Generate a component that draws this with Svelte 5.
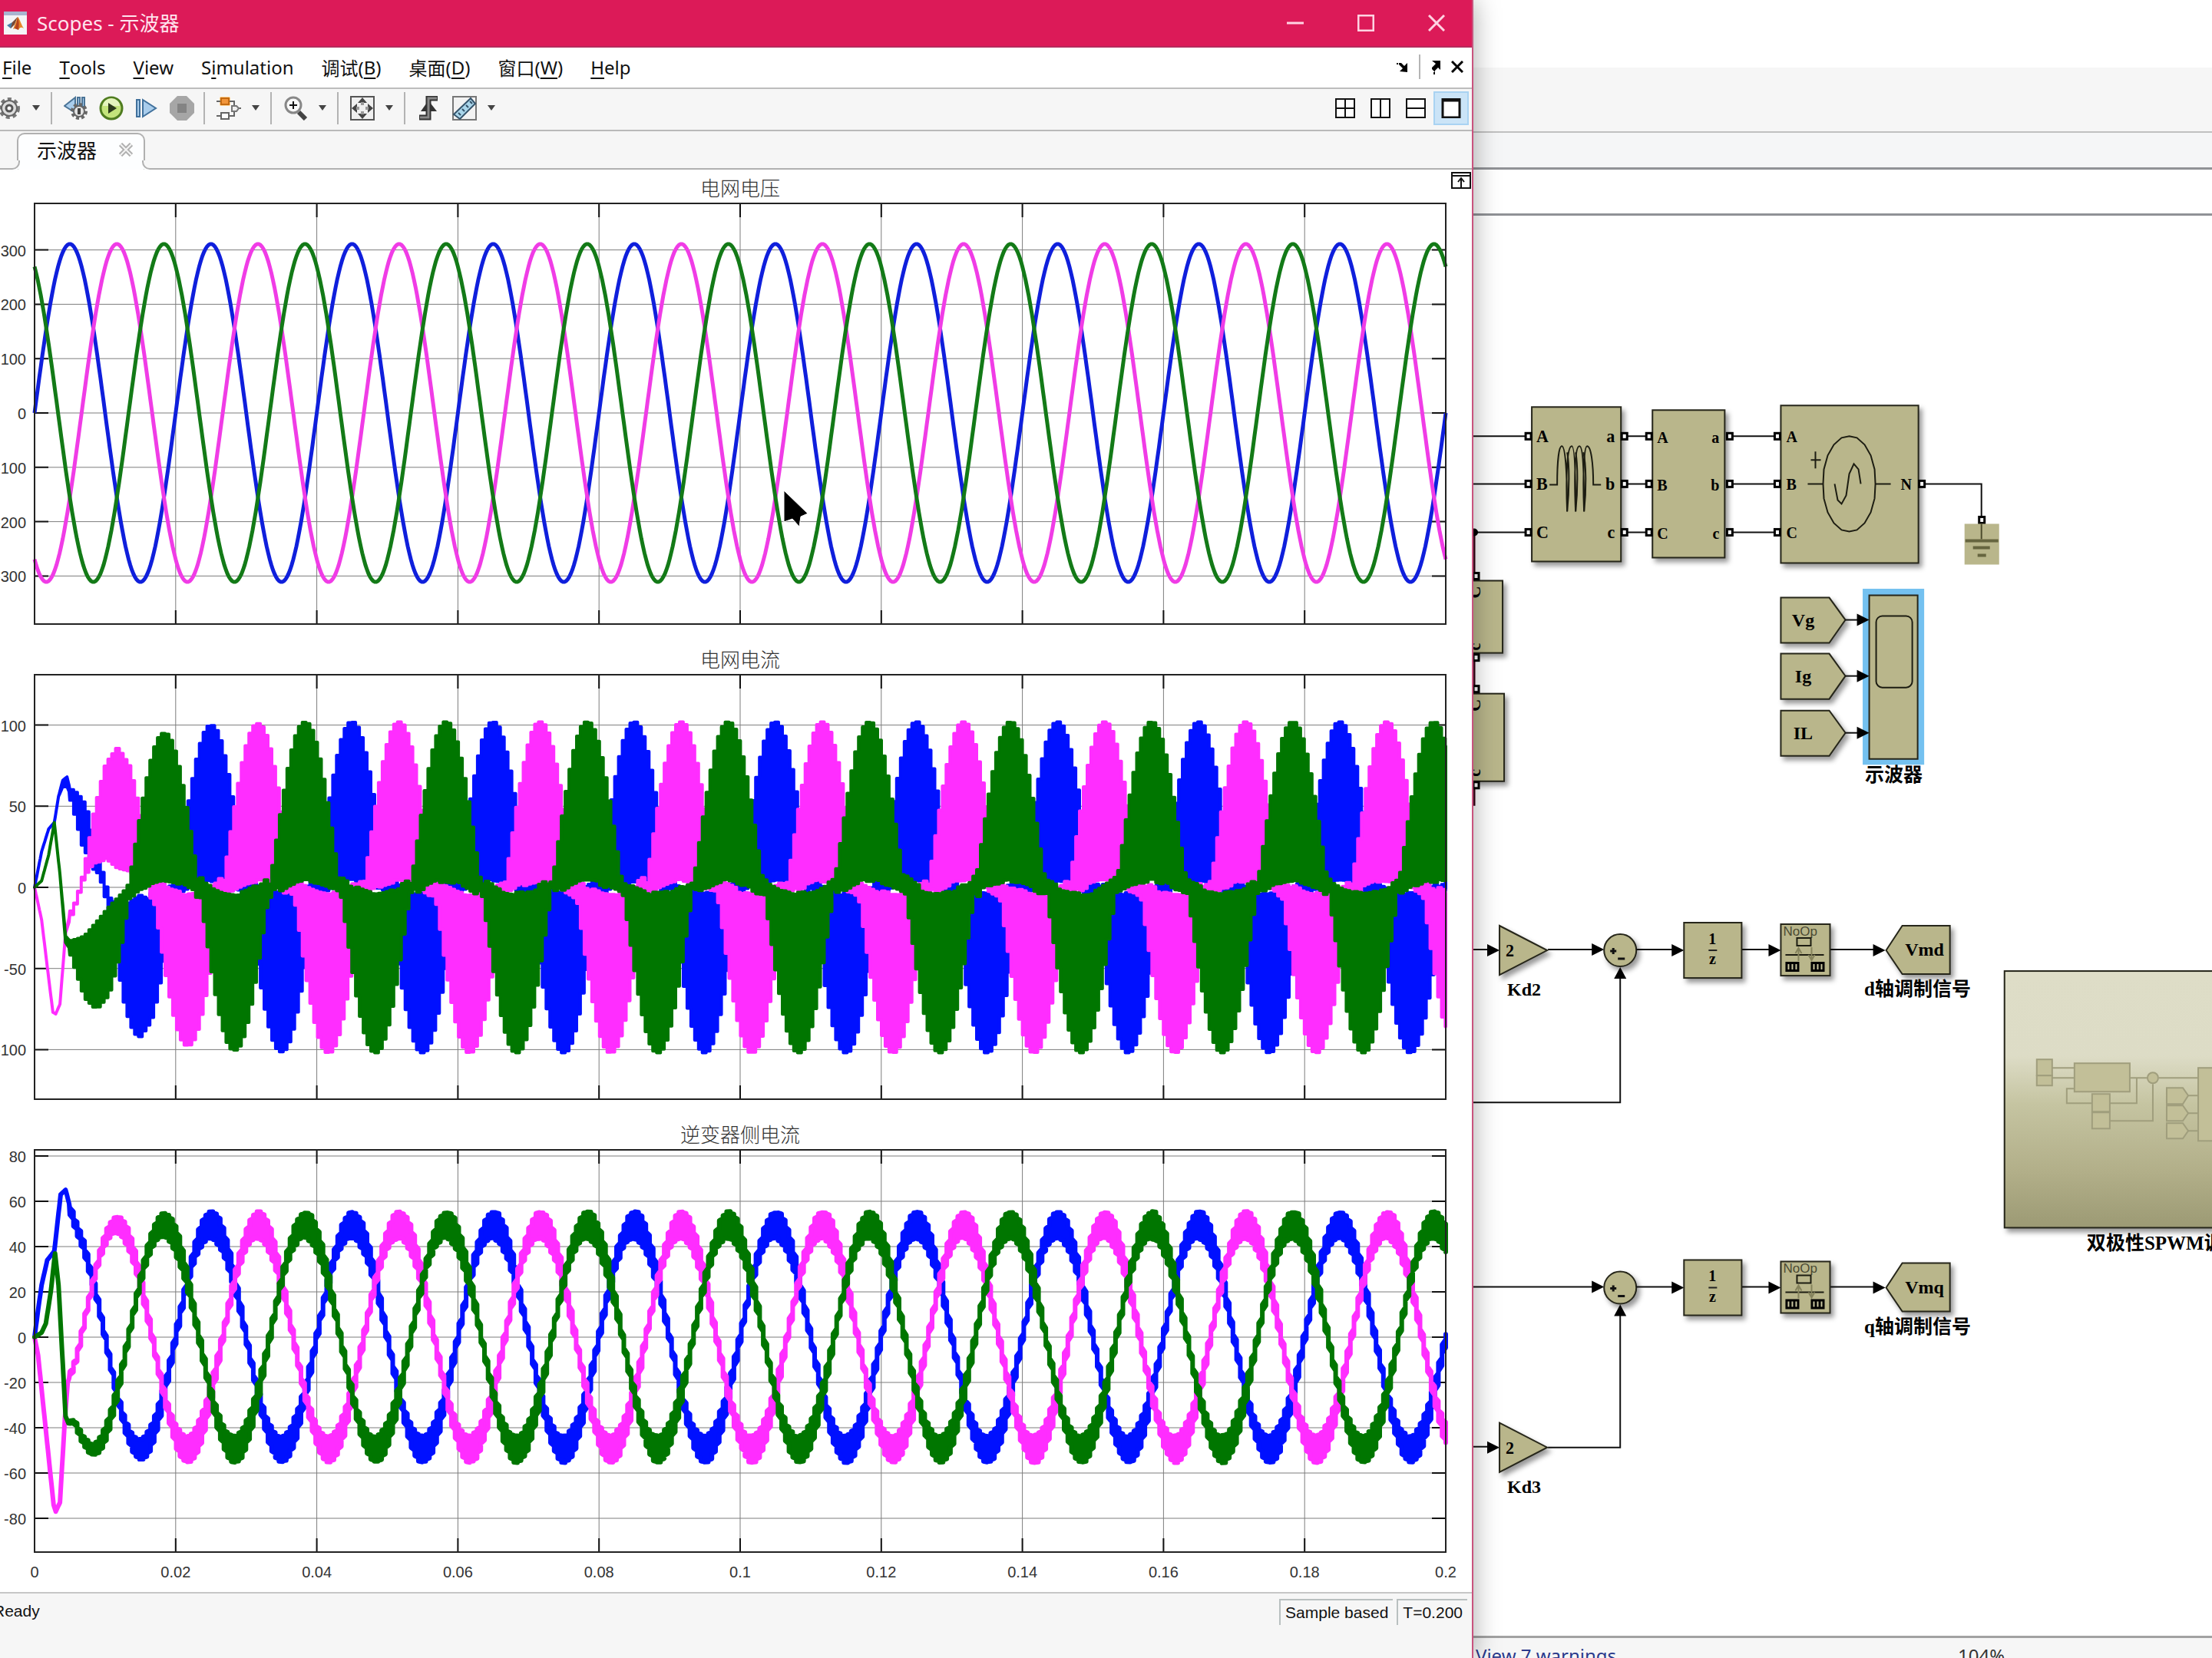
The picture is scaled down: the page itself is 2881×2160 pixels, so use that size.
<script lang="ts">
    type Row = number[];

    const X0 = 45;
    const PLOT_W = 1838;
    const T_END = 0.2;
    const W = 2 * Math.PI * 50;
    const DELAYS = [0, 0.02 / 3, -0.02 / 3];

    const menus = [
        { pre: "", key: "F", post: "ile" },
        { pre: "", key: "T", post: "ools" },
        { pre: "", key: "V", post: "iew" },
        { pre: "S", key: "i", post: "mulation" },
        { pre: "调试(", key: "B", post: ")" },
        { pre: "桌面(", key: "D", post: ")" },
        { pre: "窗口(", key: "W", post: ")" },
        { pre: "", key: "H", post: "elp" }
    ];

    const tx = (t: number) => X0 + (t / T_END) * PLOT_W;
    const noise = (n: number) => {
        const v = Math.sin(n * 12.9898) * 43758.5453;
        return (v - Math.floor(v)) * 2 - 1;
    };

    // linear lookup in rows of [t, a, b]
    function lookup(rows: Row[], t: number, col: number) {
        for (let i = 1; i < rows.length; i++) {
            if (t <= rows[i][0]) {
                const [a, b] = [rows[i - 1], rows[i]];
                return a[col] + ((b[col] - a[col]) * (t - a[0])) / (b[0] - a[0]);
            }
        }
        return rows[rows.length - 1][col];
    }

    function sinePath(delay: number, zero: number, k: number) {
        let d = "";
        for (let i = 0; i <= 900; i++) {
            const t = (i / 900) * T_END;
            d += `${i ? "L" : "M"}${tx(t).toFixed(1)} ${(zero - k * 311 * Math.sin(W * (t - delay))).toFixed(1)}`;
        }
        return d;
    }

    // closed outline of a rippling signal, held for one switching period at a time
    function bandPath(band: (t: number, n: number) => number[], zero: number, k: number, step: number, hold: number, tStart: number) {
        const top: string[] = [];
        const bottom: string[] = [];
        const add = (t: number, v: number[]) => {
            top.push(`${tx(t).toFixed(1)} ${(zero - k * v[1]).toFixed(1)}`);
            bottom.push(`${tx(t).toFixed(1)} ${(zero - k * v[0]).toFixed(1)}`);
        };
        for (let t = 0; t < tStart; t += 0.0001) add(t, band(t, 0));
        let n = 0;
        for (let t = tStart; t < T_END; t += step) {
            n++;
            const end = Math.min(t + step, T_END);
            const mid = (t + end) / 2;
            add(t, band(t * (1 - hold) + mid * hold, n));
            add(end, band(end * (1 - hold) + mid * hold, n));
        }
        return "M" + top.join("L") + "L" + bottom.reverse().join("L") + "Z";
    }

    const gridAmp = [[0, 66], [0.005, 68], [0.0083, 75], [0.0117, 85], [0.015, 92], [0.0183, 95], [0.025, 100], [0.04, 102], [0.2, 102]];
    const gridStart: Row[][] = [
        [[0, 0, 0], [0.001, 22, 22], [0.002, 36, 36], [0.0028, 40, 40], [0.0034, 56, 56], [0.004, 62, 66], [0.0046, 62, 68], [0.005, 58, 61], [0.006, 42, 58], [0.007, 24, 52], [0.0078, 19, 42], [0.0083, 12, 22], [0.0093, 8, 14], [0.0105, -12, -6], [0.012, -50, -12], [0.013, -75, -11], [0.0142, -90, -7], [0.015, -92, -5], [0.0165, -82, -8]],
        [[0, 0, 0], [0.001, -20, -20], [0.002, -56, -56], [0.0026, -77, -77], [0.003, -78, -78], [0.0036, -72, -72], [0.0044, -28, -28], [0.005, -20, -17], [0.006, -8, -8], [0.007, 6, 8], [0.0078, 12, 26], [0.0085, 15, 45], [0.0094, 16, 62], [0.0102, 18, 76], [0.0118, 12, 86], [0.0135, 10, 74], [0.015, 5, 44], [0.0166, 1, 6]],
        [[0, 0, 0], [0.001, 4, 4], [0.002, 20, 20], [0.0028, 40, 40], [0.0036, 8, 8], [0.0044, -34, -30], [0.005, -38, -33], [0.006, -52, -32], [0.0072, -68, -30], [0.0088, -75, -22], [0.0105, -66, -13], [0.012, -42, -6], [0.0133, -6, 0]]
    ];
    const invStart: Row[][] = [
        [[0, 0, 0], [0.0005, 12, 12], [0.001, 23, 23], [0.0018, 34, 34], [0.0028, 38, 38], [0.0037, 63, 63], [0.0044, 65, 65], [0.0054, 53, 53], [0.007, 40, 40], [0.0085, 22, 22]],
        [[0, 0, 0], [0.0005, -8, -8], [0.0015, -38, -38], [0.0027, -74, -74], [0.003, -77, -77], [0.0036, -73, -73], [0.0043, -36, -36], [0.0047, -20, -20], [0.006, -9, -9], [0.0076, 15, 15]],
        [[0, 0, 0], [0.001, 2, 2], [0.0016, 6, 6], [0.0023, 20, 20], [0.0029, 37, 37], [0.0034, 23, 23], [0.0044, -35, -35], [0.0048, -38, -38], [0.0056, -37, -37], [0.0068, -45, -45], [0.0081, -50, -49]]
    ];

    function gridBand(phase: number) {
        const rows = gridStart[phase];
        const last = rows[rows.length - 1][0];
        return (t: number, n: number) => {
            if (t < last) return [lookup(rows, t, 1), lookup(rows, t, 2)];
            const s = Math.sin(W * (t - DELAYS[phase]));
            const mag = Math.abs(s);
            const outer = Math.max(lookup(gridAmp, t, 1) * Math.pow(mag, 1.15), 2 + 2 * noise(Math.floor(n / 2)));
            const inner = 9 * mag - 5 + (2.6 - 1.6 * mag) * noise(Math.floor(n / 2) + phase * 37);
            return s > 0 ? [inner, outer] : [-outer, -inner];
        };
    }

    function inverterBand(phase: number) {
        const rows = invStart[phase];
        const last = rows[rows.length - 1][0];
        return (t: number, n: number) => {
            const grow = Math.min(1, t / 0.02);
            const s = Math.sin(W * (t - DELAYS[phase]));
            const lag = Math.sin(W * (t - DELAYS[phase] - 0.0006));
            const half = t < 0.005 ? 0 : (1.2 + 4.6 * lag * lag + 0.4 * noise(n)) * grow;
            const mid = t < last ? lookup(rows, t, 1) : 49.5 * s;
            return [mid - half, mid + half];
        };
    }

    const COLORS = ["blue", "pink", "green"];
    const plots = [
        {
            title: "电网电压", height: 548, zero: 273, k: 0.708, kind: "line",
            ticks: [300, 200, 100, 0, -100, -200, -300],
            paths: DELAYS.map((d) => sinePath(d, 273, 0.708))
        },
        {
            title: "电网电流", height: 553, zero: 277, k: 2.114, kind: "band",
            ticks: [100, 50, 0, -50, -100],
            paths: [0, 1, 2].map((p) => bandPath(gridBand(p), 277, 2.114, 0.00054, 1, 0.005))
        },
        {
            title: "逆变器侧电流", height: 524, zero: 244, k: 2.95, kind: "band wide",
            ticks: [80, 60, 40, 20, 0, -20, -40, -60, -80],
            paths: [0, 1, 2].map((p) => bandPath(inverterBand(p), 244, 2.95, 0.00052, 0.7, 0.005))
        }
    ];
    const timeTicks = Array.from({ length: 11 }, (_, i) => i * 0.02);
    const timeLabel = (t: number) => String(Math.round(t * 100) / 100);

    // model canvas
    const wires = [569, 631, 694];
    const tags = [
        { name: "Vg", y: 808 },
        { name: "Ig", y: 881 },
        { name: "IL", y: 955 }
    ];
    const chains = [
        { dy: 0, out: "Vmd", label: "d轴调制信号" },
        { dy: 439, out: "Vmq", label: "q轴调制信号" }
    ];
    const gains = [
        { dy: 0, label: "Kd2" },
        { dy: 647, label: "Kd3" }
    ];
    const ports = [1990, 2115, 2147, 2252, 2314];
</script>

{#snippet arrow(x: number, y: number)}
    <path class="head" d="M{x} {y} l-16 -8 v16 z" />
{/snippet}

{#snippet port(x: number, y: number)}
    <rect class="port" x={x - 3} y={y - 4} width="7" height="8" />
{/snippet}

{#snippet drop(label: string)}
    <button class="drop" aria-label={label}>
        <svg width="14" height="10" viewBox="0 0 14 10"><path d="M2 1h10L7 8z" fill="#444" /></svg>
    </button>
{/snippet}

<div class="desktop">
    <section class="scope">
        <header class="titlebar">
            <svg width="30" height="30" viewBox="0 0 30 30">
                <rect width="30" height="30" fill="#f4f4f6" />
                <rect width="30" height="5" fill="#a9b4cf" />
                <path d="M4 18l7-4 3 2-5 6z" fill="#4a7fa8" />
                <path d="M11 14l7-7-4 10-5 5z" fill="#7a4a35" />
                <path d="M18 7c3 3 5 11 8 15-3-2-5-2-7 2-1-2-3-3-7-1z" fill="#e5862a" />
                <path d="M18 7c-1 6-2 11-4 15l5 2c1-6 1-11-1-17z" fill="#b5411d" />
            </svg>
            <h1>Scopes - 示波器</h1>
            <button class="win" aria-label="Minimize">
                <svg width="22" height="22" viewBox="0 0 22 22"><path d="M0 11h22" /></svg>
            </button>
            <button class="win" aria-label="Maximize">
                <svg width="22" height="22" viewBox="0 0 22 22"><path d="M1 1h20v20H1z" /></svg>
            </button>
            <button class="win" aria-label="Close">
                <svg width="22" height="22" viewBox="0 0 22 22"><path d="M1 1l20 20M21 1L1 21" /></svg>
            </button>
        </header>

        <nav class="menubar">
            {#each menus as m}
                <button>{m.pre}<u>{m.key}</u>{m.post}</button>
            {/each}
            <div class="dock">
                <button aria-label="Dock">
                    <svg width="16" height="16" viewBox="0 0 16 16"><path d="M15 15V3l-4 4-4-4-3 0v2l5 5-4 4z" fill="#000" /><path d="M1 4h2" stroke="#000" stroke-width="2" /></svg>
                </button>
                <span class="bar"></span>
                <button aria-label="Undock">
                    <svg width="12" height="20" viewBox="0 0 12 20"><path d="M1 2h11v12L9 11l-4 4v2l-4-4v-2l5-5z" fill="#000" /><path d="M4 17v3" stroke="#000" stroke-width="2" /></svg>
                </button>
                <button aria-label="Close scope">
                    <svg width="16" height="16" viewBox="0 0 16 16"><path d="M1 1l14 14M15 1L1 15" stroke="#000" stroke-width="3" /></svg>
                </button>
            </div>
        </nav>

        <div class="toolbar">
            <button class="tool first" aria-label="Configuration">
                <svg viewBox="0 0 32 32">
                    <circle cx="16" cy="16" r="12" fill="none" stroke="#777" stroke-width="4" stroke-dasharray="5 4" />
                    <circle cx="16" cy="16" r="10" fill="#ddd" stroke="#666" stroke-width="2" />
                    <circle cx="16" cy="16" r="4" fill="#f6f6f6" stroke="#555" stroke-width="3" />
                </svg>
            </button>
            {@render drop("Configuration options")}
            <span class="sep"></span>
            <button class="tool" aria-label="Step back">
                <svg viewBox="0 0 32 32">
                    <path d="M1 13L15 2v20z" fill="#a9cdec" stroke="#4a7396" stroke-width="2" />
                    <path d="M18 2h3v12h-3zM24 2h3v12h-3z" fill="#a9cdec" stroke="#4a7396" stroke-width="2" />
                    <circle cx="20" cy="20" r="9" fill="none" stroke="#666" stroke-width="4" stroke-dasharray="4 3" />
                    <circle cx="20" cy="20" r="7" fill="#e3e3e3" stroke="#666" stroke-width="2" />
                    <path d="M20 16v8" stroke="#444" stroke-width="4" />
                </svg>
            </button>
            <button class="tool" aria-label="Run">
                <svg viewBox="0 0 32 32">
                    <circle cx="16" cy="16" r="14" fill="#c4e47c" stroke="#4f7c20" stroke-width="3" />
                    <path d="M5 13a11 10 0 0 1 22 0z" fill="#e4f4bd" />
                    <path d="M12 9l11 7-11 7z" fill="#2c3a1c" />
                </svg>
            </button>
            <button class="tool" aria-label="Step forward">
                <svg viewBox="0 0 32 32">
                    <path d="M3 5h4v22H3zM11 5l17 11-17 11z" fill="#a9cdec" stroke="#41719c" stroke-width="2" />
                </svg>
            </button>
            <button class="tool" aria-label="Stop">
                <svg viewBox="0 0 32 32">
                    <path d="M10 0h12l10 10v12L22 32H10L0 22V10z" fill="#a6a6a6" />
                    <rect x="10" y="10" width="12" height="12" fill="#848484" />
                </svg>
            </button>
            <span class="sep"></span>
            <button class="tool" aria-label="Highlight block">
                <svg viewBox="0 0 32 32">
                    <rect x="4" y="1" width="14" height="12" rx="2" fill="#ffcf8a" />
                    <path d="M0 7h6M16 7h7v6M16 26h7v-6M0 26h6M28 16h4" fill="none" stroke="#666" stroke-width="2" />
                    <rect x="6" y="3" width="10" height="8" fill="#f2953a" stroke="#c46a12" stroke-width="2" />
                    <rect x="6" y="22" width="10" height="8" fill="#fff" stroke="#666" stroke-width="2" />
                    <path d="M20 13h6l3 3-3 4h-6z" fill="#eee" stroke="#777" stroke-width="2" />
                </svg>
            </button>
            {@render drop("Highlight options")}
            <span class="sep"></span>
            <button class="tool" aria-label="Zoom">
                <svg viewBox="0 0 32 32">
                    <path d="M20 21l9 9" stroke="#444" stroke-width="6" />
                    <circle cx="13" cy="12" r="10" fill="#fafafa" stroke="#888" stroke-width="3" />
                    <path d="M8 12h10M13 7v10" stroke="#111" stroke-width="2" />
                </svg>
            </button>
            {@render drop("Zoom options")}
            <span class="sep"></span>
            <button class="tool" aria-label="Scale axes">
                <svg viewBox="0 0 32 32">
                    <rect x="1" y="1" width="30" height="30" fill="#efefef" stroke="#555" stroke-width="2" />
                    <path d="M16 2l6 7H10zM16 30l6-7H10zM2 16l7-6v12zM30 16l-7-6v12z" fill="#444" />
                    <path d="M16 8v4M16 20v4M8 16h4M20 16h4" stroke="#999" stroke-width="4" />
                </svg>
            </button>
            {@render drop("Scale options")}
            <span class="sep"></span>
            <button class="tool" aria-label="Triggers">
                <svg viewBox="0 0 32 32">
                    <path d="M3 28h12V3h12" fill="none" stroke="#333" stroke-width="7" />
                    <path d="M5 20L15 6l11 14z" fill="#333" />
                    <path d="M4 28h11V3h11" fill="none" stroke="#888" stroke-width="3" />
                </svg>
            </button>
            <button class="tool" aria-label="Measurements">
                <svg viewBox="0 0 32 32">
                    <rect x="1" y="1" width="30" height="30" fill="#f2f2f2" stroke="#777" stroke-width="2" />
                    <path d="M2 24L24 3l6 7L10 30z" fill="#a9d5ea" stroke="#35536a" stroke-width="2" />
                    <path d="M11 25l-3-3M16 20l-3-3M21 15l-3-3M26 10l-3-3" stroke="#35536a" stroke-width="2" />
                </svg>
            </button>
            {@render drop("Measurement options")}

            <div class="layouts">
                <button aria-label="Tile"><svg viewBox="0 0 26 26"><path d="M1 1h24v24H1zM13 1v24M1 13h24" /></svg></button>
                <button aria-label="Split left and right"><svg viewBox="0 0 26 26"><path d="M1 1h24v24H1zM13 1v24" /></svg></button>
                <button aria-label="Split top and bottom"><svg viewBox="0 0 26 26"><path d="M1 1h24v24H1zM1 13h24" /></svg></button>
                <button class="on" aria-label="Maximize view"><svg viewBox="0 0 26 26"><path d="M2 1h22v24H2zM2 3h22" /></svg></button>
            </div>
        </div>

        <div class="tabs">
            <div class="tab">
                <span>示波器</span>
                <button aria-label="Close tab">
                    <svg width="18" height="18" viewBox="0 0 18 18"><path d="M2 2l14 14M16 2L2 16" stroke="#b0b0b0" stroke-width="6" /><path d="M2 2l14 14M16 2L2 16" stroke="#f4f4f4" stroke-width="2" /></svg>
                </button>
            </div>
        </div>

        <div class="canvas">
            <button class="popout" aria-label="Maximize axes">
                <svg width="26" height="22" viewBox="0 0 26 22"><path d="M1 1h24v20H1zM1 5h24M13 20V9M9 13l4-5 4 5" fill="none" stroke="#111" stroke-width="2" /></svg>
            </button>
            {#each plots as plot, p}
                <figure>
                    <figcaption>{plot.title}</figcaption>
                    <svg class="plot" viewBox="0 0 1917 {plot.height}">
                        {#each timeTicks as t}
                            <path class="grid" d="M{tx(t)} 0V{plot.height}" />
                        {/each}
                        {#each plot.ticks as v}
                            <path class="grid" d="M{X0} {plot.zero - v * plot.k}H{X0 + PLOT_W}" />
                        {/each}
                        {#each timeTicks as t}
                            <path class="tick" d="M{tx(t)} 0v18M{tx(t)} {plot.height}v-18" />
                        {/each}
                        {#each plot.ticks as v}
                            <path class="tick" d="M{X0} {plot.zero - v * plot.k}h18M{X0 + PLOT_W} {plot.zero - v * plot.k}h-18" />
                            <text class="axis" x="34" y={plot.zero - v * plot.k + 8} text-anchor="end">{v}</text>
                        {/each}
                        {#each plot.paths as d, i}
                            <path class="{plot.kind} {COLORS[i]}" {d} />
                        {/each}
                        <rect class="frame" x={X0} y="0" width={PLOT_W} height={plot.height} />
                        {#if p === 0}
                            <path class="cursor" d="M1021 374v41l11-4 9 10 2-13 9-4z" />
                        {/if}
                    </svg>
                </figure>
            {/each}
            <svg class="plot times" viewBox="0 0 1917 52">
                {#each timeTicks as t}
                    <text class="axis" x={tx(t)} y="33" text-anchor="middle">{timeLabel(t)}</text>
                {/each}
            </svg>
        </div>

        <footer class="status">
            <span class="ready">Ready</span>
            <span class="field">Sample based</span>
            <span class="field">T=0.200</span>
        </footer>
    </section>

    <section class="model">
        <div class="caption"></div>
        <div class="ribbon"></div>
        <div class="crumbs"></div>
        <div class="path"></div>
        <svg class="diagram" viewBox="1919 282 962 1848" preserveAspectRatio="xMinYMin slice">
            <defs>
                <linearGradient id="sub" x1="0" y1="0" x2="0" y2="1">
                    <stop offset="0" stop-color="#deddc7" />
                    <stop offset="0.33" stop-color="#dddcc6" />
                    <stop offset="0.52" stop-color="#c5c4a1" />
                    <stop offset="0.78" stop-color="#b2af89" />
                    <stop offset="1" stop-color="#9c9a74" />
                </linearGradient>
            </defs>

            <!-- three-phase line -->
            {#each wires as y}
                <path class="wire" d="M1919 {y}H1990M2115 {y}H2147M2252 {y}H2314" />
            {/each}
            <rect class="block" x="1995" y="531" width="116" height="201" />
            <rect class="block" x="2152" y="535" width="94" height="192" />
            <rect class="block" x="2319" y="529" width="179" height="205" />
            {#each wires as y, i}
                {#each ports as x}
                    {@render port(x, y)}
                {/each}
                <text class="pin" x="2001" y={y + 8}>{"ABC"[i]}</text>
                <text class="pin" x="2103" y={y + 8} text-anchor="end">{"abc"[i]}</text>
                <text class="pin small" x="2158" y={y + 9}>{"ABC"[i]}</text>
                <text class="pin small" x="2239" y={y + 9} text-anchor="end">{"abc"[i]}</text>
                <text class="pin small" x="2326" y={y + 8}>{"ABC"[i]}</text>
            {/each}
            <path class="ink" d="M2018 632H2028C2028 604 2030 582 2034 582C2039 582 2041 620 2041 667M2041 667C2039 620 2041 582 2047 582C2051 582 2052 620 2052 667M2052 667C2050 620 2051 582 2057 582C2062 582 2063 620 2063 667M2063 667C2061 620 2063 582 2067 582C2072 582 2075 604 2075 632H2085" />
            <path class="ink" d="M2041 667C2044 640 2044 605 2041 590M2052 667C2055 640 2055 605 2052 590M2063 667C2066 640 2066 605 2062 590" />
            <path class="ink" d="M2408 569L2418 571 2428 580 2436 594 2441 612 2442 631 2441 650 2436 668 2428 682 2418 691 2408 693 2398 691 2388 682 2380 668 2375 650 2374 631 2375 612 2380 594 2388 580 2398 571zM2354 631h20M2442 631h20M2364 589v22M2358 600h13" />
            <path class="ink" d="M2389 631L2393 652 2398 657 2404 646 2408 618 2414 605 2420 612 2423 631" />
            <text class="pin small" x="2475" y="639">N</text>
            <path class="wire" d="M2502 631H2580V678" />
            {@render port(2502, 631)}
            {@render port(2580, 678)}
            <rect x="2558" y="683" width="45" height="53" fill="#b9b68b" />
            <path d="M2580 683v20" stroke="#4d4c2c" stroke-width="2" />
            <path d="M2559 705h43M2569 714h22M2575 724h11" stroke="#66653f" stroke-width="4" />

            <!-- blocks that run on under the scope window -->
            <path d="M1920 694V1050" stroke="#3a0a1c" stroke-width="3" />
            <circle cx="1920" cy="694" r="5" />
            <rect class="block" x="1900" y="757" width="57" height="94" />
            <rect class="block" x="1900" y="904" width="59" height="114" />
            <text class="pin" text-anchor="middle" transform="translate(1928 772) rotate(-90)">C</text>
            <text class="pin" text-anchor="middle" transform="translate(1928 843) rotate(-90)">c</text>
            <text class="pin" text-anchor="middle" transform="translate(1928 919) rotate(-90)">C</text>
            <text class="pin" text-anchor="middle" transform="translate(1928 1007) rotate(-90)">c</text>
            {#each [751, 857, 898, 1023] as y}
                {@render port(1922, y)}
            {/each}

            <!-- scope block and its inputs -->
            <rect x="2430" y="772" width="71" height="220" fill="none" stroke="#74c1f0" stroke-width="9" />
            <rect class="block flat" x="2434" y="776" width="63" height="213" />
            <rect class="ink" x="2443" y="803" width="47" height="93" rx="8" />
            {#each tags as tag}
                <path class="block" d="M2319 {tag.y - 29}H2382L2403 {tag.y}L2382 {tag.y + 30}H2319z" />
                <text class="name" x="2348" y={tag.y + 8}>{tag.name}</text>
                <path class="wire" d="M2403 {tag.y}h18" />
                {@render arrow(2434, tag.y)}
            {/each}
            <text class="name cn" x="2466" y="1018">示波器</text>

            <!-- d and q chains -->
            <path class="wire" d="M1919 1436H2110V1270M2016 1885H2110V1710M1919 1676H2080M2016 1237H2080" />
            {#each gains as g}
                <g transform="translate(0 {g.dy})">
                    <path class="wire" d="M1919 1237h24" />
                    {@render arrow(1953, 1238)}
                    <path class="block" d="M1953 1206L2015 1238L1953 1270z" />
                    <text class="pin" x="1961" y="1246">2</text>
                    <text class="name" x="1985" y="1297">{g.label}</text>
                </g>
            {/each}
            {#each chains as c}
                <g transform="translate(0 {c.dy})">
                    {@render arrow(2089, 1237)}
                    <circle class="block" cx="2110" cy="1238" r="21" />
                    <path d="M2097 1239h8M2101 1235v8M2107 1249h9" stroke="#111" stroke-width="3" />
                    <path class="head" d="M2110 1260l-8 15h16z" />
                    <path class="wire" d="M2131 1237H2183M2268 1237H2308M2383 1237H2444" />
                    {@render arrow(2193, 1238)}
                    <rect class="block" x="2193" y="1202" width="75" height="72" />
                    <text class="frac" x="2230" y="1230">1</text>
                    <path d="M2225 1238h11" stroke="#222" stroke-width="2" />
                    <text class="frac" x="2230" y="1256">z</text>
                    {@render arrow(2319, 1238)}
                    <rect class="block" x="2319" y="1204" width="64" height="67" />
                    <text class="noop" x="2322" y="1219">NoOp</text>
                    <path class="ink" d="M2340 1222h18v10h-18zM2325 1244h50" />
                    <path d="M2342 1252v-16M2338 1242l4-7 4 7M2359 1234v16M2355 1244l4 7 4-7" fill="none" stroke="#85835c" stroke-width="2" />
                    <path d="M2325 1253h18v13h-18zM2358 1253h18v13h-18z" />
                    <path d="M2329 1256v7M2334 1256v7M2339 1256v7M2362 1256v7M2367 1256v7M2372 1256v7" stroke="#c9c6a0" stroke-width="2" />
                    {@render arrow(2455, 1238)}
                    <path class="block" d="M2456 1238L2477 1206H2539V1269H2477z" />
                    <text class="name" x="2506" y="1245">{c.out}</text>
                    <text class="name cn" x="2497" y="1297">{c.label}</text>
                </g>
            {/each}

            <!-- modulation subsystem -->
            <rect class="block" x="2610" y="1265" width="400" height="334" style:fill="url(#sub)" />
            <g class="inner">
                <path d="M2672 1391h29M2672 1404h29M2773 1404h22M2811 1404h51M2782 1404v33h-35M2724 1437h-33v-19h10M2747 1460h56v-48M2849 1427h13M2849 1450h13M2849 1473h13" />
                <rect x="2652" y="1380" width="20" height="21" />
                <rect x="2652" y="1401" width="20" height="13" />
                <rect x="2701" y="1385" width="72" height="37" />
                <rect x="2724" y="1425" width="23" height="23" />
                <rect x="2724" y="1449" width="23" height="21" />
                <circle cx="2803" cy="1404" r="7" />
                <path d="M2821 1417h21l7 10-7 11h-21zM2821 1440h21l7 10-7 10h-21zM2821 1463h21l7 10-7 10h-21z" />
                <rect x="2862" y="1391" width="80" height="95" />
            </g>
            <text class="name cn start" x="2717" y="1628">双极性SPWM调制</text>
        </svg>
        <footer class="model-status">
            <a href="#warnings">View 7 warnings</a>
            <span>104%</span>
        </footer>
    </section>
</div>

<style>
    :global(body) {
        margin: 0;
        overflow: hidden;
    }
    .desktop {
        display: grid;
        grid-template-columns: 1919fr 962fr;
        height: 100vh;
        background: #fff;
        color: #111;
        font-family: "Noto Sans", "Noto Sans CJK SC", sans-serif;
        font-size: 24px;
    }
    button {
        display: flex;
        align-items: center;
        justify-content: center;
        padding: 0;
        border: 0;
        background: none;
        color: inherit;
        font: inherit;
        white-space: nowrap;
    }
    svg {
        display: block;
        flex: none;
    }

    .scope {
        position: relative;
        z-index: 1;
        display: flex;
        flex-direction: column;
        min-width: 0;
        box-sizing: border-box;
        border-right: 2px solid #c9537e;
        background: #fff;
        box-shadow: 0 0 32px rgba(0, 0, 0, 0.35);
    }
    .titlebar {
        display: flex;
        align-items: center;
        height: 62px;
        box-sizing: border-box;
        padding-left: 5px;
        border-bottom: 2px solid #b52a5c;
        background: #dc1a58;
        color: #ffe4ee;
    }
    h1 {
        flex: 1;
        margin: 0 0 0 13px;
        font-size: 26px;
        font-weight: 400;
        line-height: 32px;
    }
    .win {
        width: 92px;
        height: 60px;
    }
    .win path {
        fill: none;
        stroke: #ffd3e2;
        stroke-width: 3;
    }
    .menubar {
        display: flex;
        align-items: center;
        gap: 36px;
        height: 54px;
        box-sizing: border-box;
        padding: 0 11px 2px 3px;
        border-bottom: 2px solid #bdbdbd;
    }
    .menubar u {
        text-underline-offset: 4px;
    }
    .dock {
        display: flex;
        align-items: center;
        gap: 14px;
        margin-left: auto;
    }
    .bar {
        width: 2px;
        height: 32px;
        background: #b5b5b5;
    }
    .toolbar {
        display: flex;
        align-items: center;
        height: 55px;
        box-sizing: border-box;
        padding: 0 4px 3px 0;
        border-bottom: 2px solid #b9b9b9;
        background: #f6f6f6;
    }
    .tool + .tool {
        margin-left: 14px;
    }
    .tool svg {
        width: 32px;
        height: 32px;
    }
    .tool.first {
        margin-left: -4px;
    }
    .drop {
        margin-left: 12px;
    }
    .sep {
        width: 2px;
        height: 42px;
        margin: 0 15px 0 12px;
        background: #b3b3b3;
    }
    .layouts {
        display: flex;
        margin-left: auto;
    }
    .layouts button {
        width: 46px;
        height: 44px;
        box-sizing: border-box;
    }
    .layouts svg {
        width: 26px;
        height: 26px;
    }
    .layouts path {
        fill: #fff;
        stroke: #111;
        stroke-width: 2;
    }
    .layouts .on {
        border: 2px solid #a9d3f2;
        background: #cbe4f7;
    }
    .layouts .on path {
        stroke-width: 3;
    }
    .tabs {
        display: flex;
        align-items: flex-end;
        height: 50px;
        box-sizing: border-box;
        padding-left: 22px;
        border-bottom: 2px solid #b0b0b0;
        background: #f6f6f6;
    }
    .tab {
        position: relative;
        display: flex;
        align-items: center;
        gap: 29px;
        height: 48px;
        box-sizing: border-box;
        margin-bottom: -2px;
        padding: 0 14px 6px 24px;
        border: 2px solid #b0b0b0;
        border-bottom: 0;
        border-radius: 10px 10px 0 0;
        background: #fdfeff;
        font-size: 26px;
    }
    /* flared feet of the tab */
    .tab::before,
    .tab::after {
        content: "";
        position: absolute;
        bottom: 0;
        width: 10px;
        height: 10px;
        border-bottom: 2px solid #b0b0b0;
        background: #f6f6f6;
        box-shadow: 0 3px 0 #fdfeff;
    }
    .tab::before {
        right: 100%;
        border-right: 2px solid #b0b0b0;
        border-bottom-right-radius: 10px;
        margin-right: -2px;
    }
    .tab::after {
        left: 100%;
        border-left: 2px solid #b0b0b0;
        border-bottom-left-radius: 10px;
        margin-left: -2px;
    }

    .canvas {
        position: relative;
        overflow: hidden;
    }
    .popout {
        position: absolute;
        top: 3px;
        right: 1px;
    }
    figure {
        margin: 0;
    }
    figcaption {
        padding: 24px 0 0 11px;
        color: #333;
        font-family: "Noto Sans CJK SC", sans-serif;
        font-size: 26px;
        font-weight: 300;
        line-height: 42px;
        text-align: center;
    }
    figure:first-of-type figcaption {
        padding-top: 2px;
    }
    .plot {
        width: 100%;
        height: auto;
        overflow: visible;
    }
    .axis {
        fill: #333;
        font-family: "Liberation Sans", sans-serif;
        font-size: 20px;
    }
    .grid {
        stroke: #7d7d7d;
        stroke-width: 1;
    }
    .tick {
        stroke: #111;
        stroke-width: 2;
    }
    .frame {
        fill: none;
        stroke: #222;
        stroke-width: 2;
    }
    .line {
        fill: none;
        stroke-width: 5;
    }
    .line.blue {
        stroke: #0f1fdc;
    }
    .line.pink {
        stroke: #f03ce6;
    }
    .line.green {
        stroke: #137a17;
    }
    .band {
        stroke-width: 4;
        stroke-linejoin: round;
    }
    .band.wide {
        stroke-width: 6;
    }
    .band.blue {
        fill: #0010ff;
        stroke: #0010ff;
    }
    .band.pink {
        fill: #ff2dff;
        stroke: #ff2dff;
    }
    .band.green {
        fill: #007600;
        stroke: #007600;
    }
    .cursor {
        fill: #000;
        stroke: #fff;
        stroke-width: 1;
    }
    .status {
        display: flex;
        flex: 1;
        align-items: flex-start;
        gap: 5px;
        padding: 7px 6px 0 0;
        border-top: 2px solid #c6c6c6;
        background: #f6f6f6;
        font-family: "Liberation Sans", sans-serif;
        font-size: 21px;
        line-height: 32px;
    }
    .ready {
        flex: 1;
        margin-left: -9px;
    }
    .field {
        padding: 0 6px;
        border: solid #b9c0c0;
        border-width: 2px 0 0 2px;
    }

    .model {
        display: flex;
        flex-direction: column;
        min-width: 0;
        min-height: 0;
        overflow: hidden;
    }
    .caption {
        height: 88px;
    }
    .ribbon {
        height: 83px;
        border-bottom: 2px solid #c0c0c0;
        background: #f6f6f6;
    }
    .crumbs {
        height: 45px;
        border-bottom: 3px solid #909296;
        background: #f5f6f7;
    }
    .path {
        height: 57px;
        border-bottom: 3px solid #909296;
    }
    .diagram {
        flex: 1;
        width: 100%;
        min-height: 0;
    }
    .wire {
        fill: none;
        stroke: #111;
        stroke-width: 2;
    }
    .head {
        fill: #000;
    }
    .port {
        fill: #fff;
        stroke: #000;
        stroke-width: 3;
    }
    .block {
        fill: #b9b68b;
        stroke: #26261a;
        stroke-width: 2;
        filter: drop-shadow(4px 5px 3px rgba(0, 0, 0, 0.4));
    }
    .block.flat {
        filter: none;
    }
    .ink {
        fill: none;
        stroke: #1d1d12;
        stroke-width: 2;
    }
    .pin,
    .name,
    .frac {
        font-family: "Liberation Serif", "Noto Sans CJK SC", serif;
        font-weight: 700;
    }
    .pin {
        font-size: 22px;
    }
    .pin.small {
        font-size: 20px;
    }
    .name {
        font-size: 24px;
        text-anchor: middle;
    }
    .name.cn {
        font-size: 25px;
    }
    .name.start {
        text-anchor: start;
    }
    .frac {
        font-size: 20px;
        text-anchor: middle;
    }
    .noop {
        fill: #4b4a33;
        font-family: "Liberation Sans", sans-serif;
        font-size: 17px;
    }
    .inner {
        fill: #c2bf98;
        stroke: #a09e7d;
        stroke-width: 2;
    }
    .inner > path:first-child {
        fill: none;
    }
    .model-status {
        display: flex;
        height: 29px;
        box-sizing: border-box;
        padding-left: 3px;
        border-top: 3px solid #a2a2a2;
        background: #f6f6f6;
        line-height: 46px;
    }
    .model-status a {
        flex: 1;
        color: #2b3a8c;
        text-decoration: none;
    }
    .model-status span {
        flex: none;
        width: 331px;
        color: #333;
    }
</style>
